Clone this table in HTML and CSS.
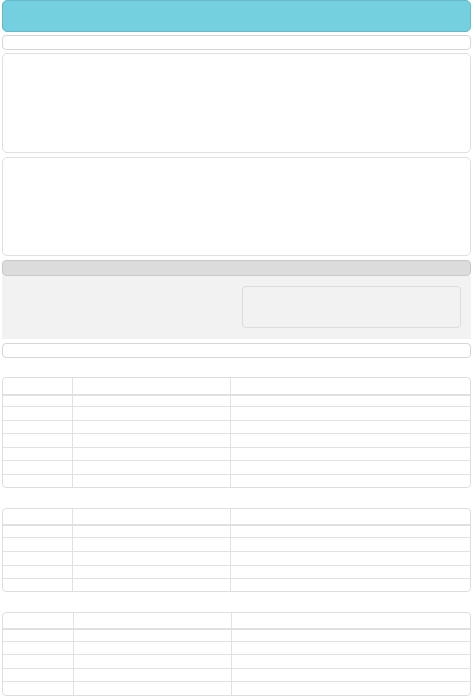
FILE: index.html
```html
<!DOCTYPE html>
<html>
<head>
<meta charset="utf-8">
<link rel="stylesheet" href="styles.css">
</head>
<body>
<div class="page">
  <div class="banner"></div>
  <div class="bar"></div>
  <div class="box box-a"></div>
  <div class="box box-b"></div>
  <div class="section">
    <div class="section-head"></div>
    <div class="section-body">
      <div class="inner-box"></div>
    </div>
  </div>
  <div class="bar bar-b"></div>

  <div class="table t1">
    <div class="row head"><div class="c"></div><div class="c"></div><div class="c"></div></div>
    <div class="row r11"><div class="c"></div><div class="c"></div><div class="c"></div></div>
    <div class="row r14"><div class="c"></div><div class="c"></div><div class="c"></div></div>
    <div class="row r13"><div class="c"></div><div class="c"></div><div class="c"></div></div>
    <div class="row r14"><div class="c"></div><div class="c"></div><div class="c"></div></div>
    <div class="row r13"><div class="c"></div><div class="c"></div><div class="c"></div></div>
    <div class="row r14"><div class="c"></div><div class="c"></div><div class="c"></div></div>
    <div class="row r12 last"><div class="c"></div><div class="c"></div><div class="c"></div></div>
  </div>

  <div class="table t2">
    <div class="row head"><div class="c"></div><div class="c"></div><div class="c"></div></div>
    <div class="row r12"><div class="c"></div><div class="c"></div><div class="c"></div></div>
    <div class="row r14"><div class="c"></div><div class="c"></div><div class="c"></div></div>
    <div class="row r14"><div class="c"></div><div class="c"></div><div class="c"></div></div>
    <div class="row r13"><div class="c"></div><div class="c"></div><div class="c"></div></div>
    <div class="row r12 last"><div class="c"></div><div class="c"></div><div class="c"></div></div>
  </div>

  <div class="table t3">
    <div class="row head"><div class="c"></div><div class="c"></div><div class="c"></div></div>
    <div class="row r12"><div class="c"></div><div class="c"></div><div class="c"></div></div>
    <div class="row r13"><div class="c"></div><div class="c"></div><div class="c"></div></div>
    <div class="row r14"><div class="c"></div><div class="c"></div><div class="c"></div></div>
    <div class="row r13"><div class="c"></div><div class="c"></div><div class="c"></div></div>
    <div class="row r13 last"><div class="c"></div><div class="c"></div><div class="c"></div></div>
  </div>
</div>
</body>
</html>
```
FILE: styles.css
```css
html, body {
  margin: 0;
  padding: 0;
  background: #ffffff;
  font-family: "Liberation Sans", Arial, sans-serif;
}
.page {
  display: flex;
  flex-direction: column;
  padding: 0 3px 0 2px;
}
.banner {
  height: 30px;
  background: #74cfdf;
  border: 1px solid #67b9c8;
  border-radius: 5px;
}
.bar {
  margin-top: 3px;
  height: 13px;
  border: 1px solid #d6d6d6;
  border-radius: 4px;
  background: #fff;
}
.box {
  border: 1px solid #e0e0e0;
  border-radius: 5px;
  background: #fff;
}
.box-a {
  margin-top: 3px;
  height: 98px;
}
.box-b {
  margin-top: 4px;
  height: 97px;
}
.section {
  margin-top: 4px;
  display: flex;
  flex-direction: column;
}
.section-head {
  height: 14px;
  background: #dcdcdc;
  border: 1px solid #c9c9c9;
  border-radius: 4px;
}
.section-body {
  height: 53px;
  background: #f2f2f2;
  display: flex;
  justify-content: flex-end;
  padding: 10px 10px 0 0;
}
.inner-box {
  width: 217px;
  height: 40px;
  border: 1px solid #dcdcdc;
  border-radius: 4px;
  background: #f2f2f2;
}
.bar-b {
  margin-top: 4px;
}
.table {
  border: 1px solid #dedede;
  border-radius: 4px;
  display: flex;
  flex-direction: column;
  overflow: hidden;
}
.t1 { margin-top: 19px; }
.t2 { margin-top: 20px; }
.t3 { margin-top: 20px; }
.row {
  display: grid;
  grid-template-columns: 70px 158px 1fr;
  border-bottom: 1px solid #e2e2e2;
  box-sizing: border-box;
}
.row.last { border-bottom: none; }
.row.head {
  height: 18px;
  border-bottom: 2px solid #e0e0e0;
}
.t2 .row.head, .t3 .row.head { height: 17px; }
.t3 .row { grid-template-columns: 71px 158px 1fr; }
.c { border-right: 1px solid #e2e2e2; }
.c:last-child { border-right: none; }
.r11 { height: 11px; }
.r12 { height: 12px; }
.r13 { height: 13px; }
.r14 { height: 14px; }
```
